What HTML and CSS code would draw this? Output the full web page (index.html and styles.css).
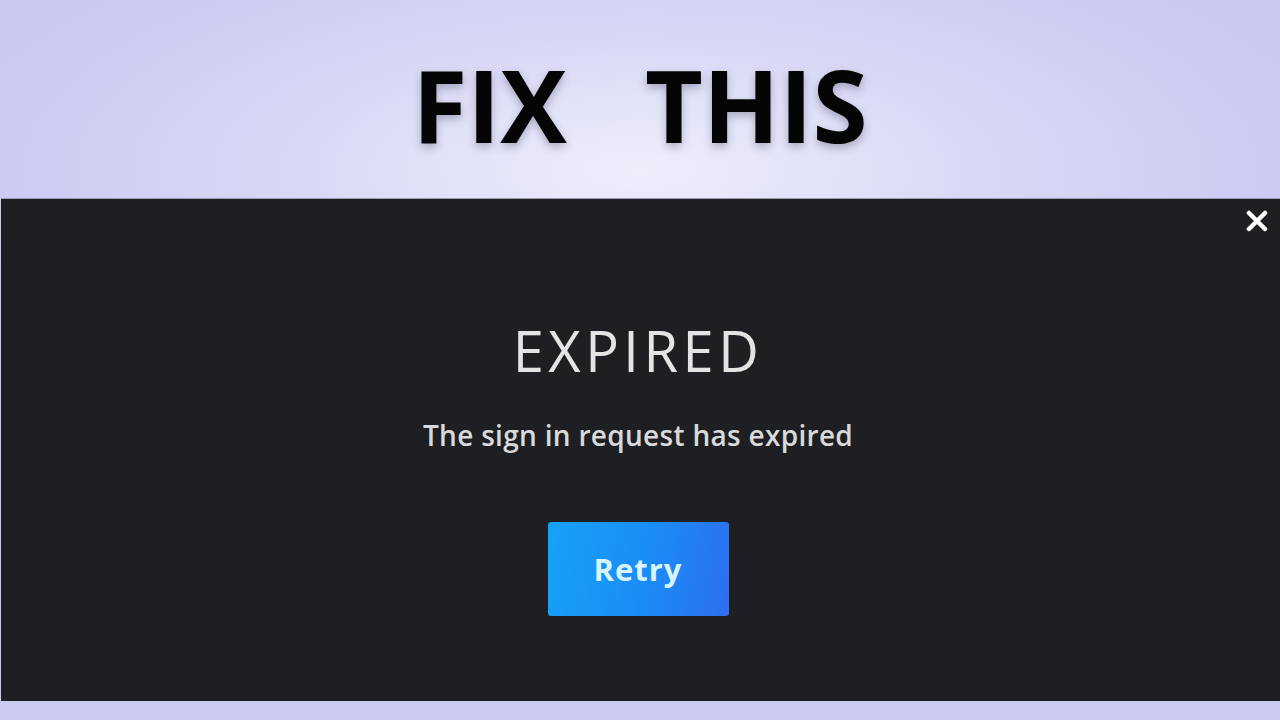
FILE: index.html
```html
<!DOCTYPE html>
<html lang="en">
<head>
  <meta charset="UTF-8" />
  <meta name="viewport" content="width=device-width, initial-scale=1.0"/>
  <title>Fix This</title>
  <link rel="stylesheet" href="styles.css">
</head>
<body>
  <header class="banner">
    <h1>FIX&nbsp;&nbsp;&nbsp;THIS</h1>
  </header>

  <section class="dialog">
    <button class="close" aria-label="Close">
      <svg width="22" height="22" viewBox="0 0 22 22">
        <path d="M3 3 L19 19 M19 3 L3 19" stroke="#fff" stroke-width="4.5" stroke-linecap="round"/>
      </svg>
    </button>
    <h2>EXPIRED</h2>
    <p>The sign in request has expired</p>
    <button class="retry">Retry</button>
  </section>

  <div class="strip"></div>
</body>
</html>
```

FILE: styles.css
```css
html, body {
  margin: 0;
  height: 720px;
  overflow: hidden;
}
body {
  display: flex;
  flex-direction: column;
  font-family: "Open Sans", sans-serif;
  background: radial-gradient(ellipse 700px 260px at 640px 170px, #eeeefb 0%, #d6d6f5 55%, #c9c9f2 100%);
}
.banner {
  height: 198px;
  display: flex;
  justify-content: center;
}
.banner h1 {
  margin: 34px 0 0;
  font-size: 100px;
  font-weight: 700;
  line-height: 140px;
  color: #050505;
  letter-spacing: 0;
  text-shadow: 0 4px 8px rgba(60, 60, 90, 0.35);
}
.dialog {
  position: relative;
  height: 502px;
  margin-left: 1px;
  padding-right: 5px;
  background: #1e1f23;
  display: flex;
  flex-direction: column;
  align-items: center;
  color: #e6e6e6;
  border-top: 1px solid #9b9bb6;
}
.dialog h2 {
  margin: 116px 0 0;
  font-size: 56px;
  font-weight: 400;
  letter-spacing: 4.5px;
  line-height: 70px;
  color: #e4e4e4;
}
.dialog p {
  margin: 30px 0 0;
  font-size: 28px;
  font-weight: 600;
  letter-spacing: 0.3px;
  color: #d9d9d9;
  line-height: 40px;
}
.close {
  position: absolute;
  top: 11px;
  right: 12px;
  background: none;
  border: none;
  padding: 0;
}
.retry {
  margin-top: 67px;
  width: 181px;
  height: 94px;
  border: none;
  border-radius: 3px;
  background: linear-gradient(100deg, #16a2f7 0%, #1b8cf7 55%, #2d6ef0 100%);
  color: #d8f4ff;
  font-family: "Open Sans", sans-serif;
  font-size: 31px;
  font-weight: 700;
  letter-spacing: 1px;
  cursor: pointer;
}
.strip {
  flex: 1;
  background: #cbcbf2;
}
```
